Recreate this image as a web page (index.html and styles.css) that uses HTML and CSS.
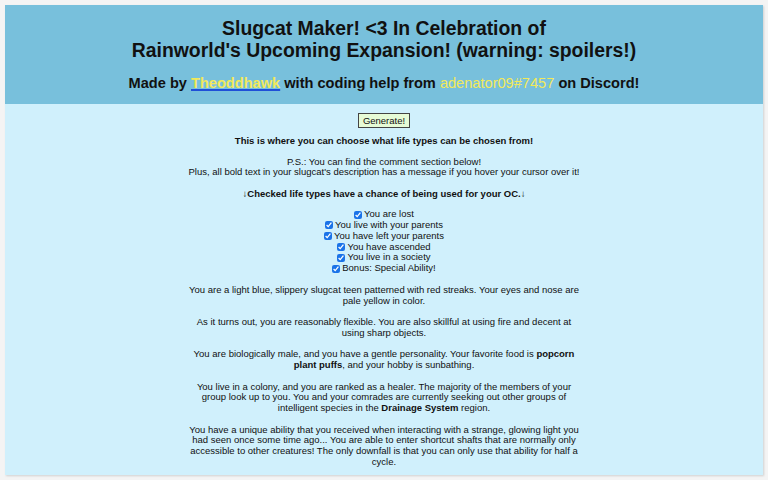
FILE: index.html
```html
<!DOCTYPE html>
<html>
<head>
<meta charset="utf-8">
<link rel="stylesheet" href="styles.css">
</head>
<body>
<div class="page">
  <header class="header">
    <h1 class="title">Slugcat Maker! &lt;3 In Celebration of<br>Rainworld's Upcoming Expansion! (warning: spoilers!)</h1>
    <h2 class="credits">Made by <a class="credit-link" href="#"><span class="yellow">Theoddhawk</span></a> with coding help from <span class="yellow normal">adenator09#7457</span> on Discord!</h2>
  </header>
  <main class="content">
    <button class="gen-btn" type="button">Generate!</button>
    <p class="bold intro">This is where you can choose what life types can be chosen from!</p>
    <p>P.S.: You can find the comment section below!<br>Plus, all bold text in your slugcat's description has a message if you hover your cursor over it!</p>
    <p class="bold">↓Checked life types have a chance of being used for your OC.↓</p>
    <div class="checks">
      <label><input type="checkbox" checked> You are lost</label>
      <label><input type="checkbox" checked> You live with your parents</label>
      <label><input type="checkbox" checked> You have left your parents</label>
      <label><input type="checkbox" checked> You have ascended</label>
      <label><input type="checkbox" checked> You live in a society</label>
      <label><input type="checkbox" checked> Bonus: Special Ability!</label>
    </div>
    <p>You are a light blue, slippery slugcat teen patterned with red streaks. Your eyes and nose are pale yellow in color.</p>
    <p>As it turns out, you are reasonably flexible. You are also skillful at using fire and decent at using sharp objects.</p>
    <p>You are biologically male, and you have a gentle personality. Your favorite food is <b>popcorn plant puffs</b>, and your hobby is sunbathing.</p>
    <p>You live in a colony, and you are ranked as a healer. The majority of the members of your group look up to you. You and your comrades are currently seeking out other groups of intelligent species in the <b>Drainage System</b> region.</p>
    <p>You have a unique ability that you received when interacting with a strange, glowing light you had seen once some time ago... You are able to enter shortcut shafts that are normally only accessible to other creatures! The only downfall is that you can only use that ability for half a cycle.</p>
  </main>
</div>
</body>
</html>
```
FILE: styles.css
```css
html, body {
  margin: 0;
  padding: 0;
}
body {
  background: #f4f4f4;
  font-family: "Liberation Sans", Arial, sans-serif;
  color: #111;
  padding: 5px 5px;
  height: 480px;
  box-sizing: border-box;
  overflow: hidden;
}
.page {
  width: 758px;
  box-shadow: 1px 1px 2px rgba(0,0,0,0.15);
}
.header {
  background: #78c0dc;
  text-align: center;
  padding: 12px 0 12px;
  height: 99px;
  box-sizing: border-box;
}
.title {
  margin: 0;
  font-size: 19.4px;
  line-height: 22px;
  font-weight: bold;
}
.credits {
  margin: 13px 0 0;
  font-size: 14.6px;
  line-height: 18px;
  font-weight: bold;
}
.yellow {
  color: #f2e95a;
}
.normal {
  font-weight: normal;
}
.credit-link {
  text-decoration: underline;
  text-decoration-color: #1f4fd8;
  text-decoration-thickness: 2px;
  color: #1f4fd8;
}
.content {
  background: #d0f0fc;
  text-align: center;
  font-size: 9.5px;
  line-height: 10.75px;
  padding: 9px 0 9px;
  height: 371px;
  box-sizing: border-box;
  display: flex;
  flex-direction: column;
  align-items: center;
}
.content p {
  width: 395px;
  margin: 0 0 10.75px;
}
.content p.intro {
  margin-bottom: 9.75px;
}
.gen-btn {
  font-family: "Liberation Sans", Arial, sans-serif;
  font-size: 9.5px;
  line-height: 11px;
  background: #e6fbd6;
  border: 1px solid #444;
  border-radius: 0;
  padding: 1px 4px;
  margin: 0 0 8px;
  color: #111;
}
.bold {
  font-weight: bold;
}
.checks {
  display: flex;
  flex-direction: column;
  align-items: center;
  margin-top: -1px;
  margin-bottom: 10.75px;
}
.checks label {
  display: flex;
  align-items: center;
  height: 10.8px;
  gap: 2px;
}
.checks input {
  width: 8px;
  height: 8px;
  margin: 0;
  accent-color: #1a73e8;
}
```
